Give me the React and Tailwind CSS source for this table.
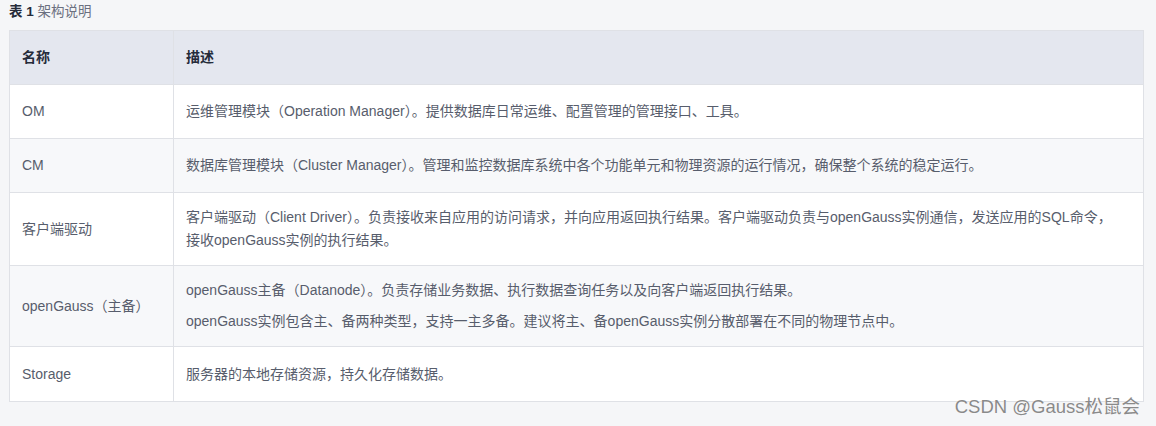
import React from 'react';

const rows = [
  { name: 'OM', desc: ['运维管理模块（Operation Manager）。提供数据库日常运维、配置管理的管理接口、工具。'] },
  { name: 'CM', desc: ['数据库管理模块（Cluster Manager）。管理和监控数据库系统中各个功能单元和物理资源的运行情况，确保整个系统的稳定运行。'] },
  {
    name: '客户端驱动',
    desc: ['客户端驱动（Client Driver）。负责接收来自应用的访问请求，并向应用返回执行结果。客户端驱动负责与openGauss实例通信，发送应用的SQL命令，接收openGauss实例的执行结果。'],
  },
  {
    name: 'openGauss（主备）',
    desc: [
      'openGauss主备（Datanode）。负责存储业务数据、执行数据查询任务以及向客户端返回执行结果。',
      'openGauss实例包含主、备两种类型，支持一主多备。建议将主、备openGauss实例分散部署在不同的物理节点中。',
    ],
  },
  { name: 'Storage', desc: ['服务器的本地存储资源，持久化存储数据。'] },
];

export default function App() {
  return (
    <div
      className="relative w-[1156px] h-[426px] bg-[#f5f6f8] pl-[9px] pr-[12px] overflow-hidden"
      style={{ fontFamily: '"Liberation Sans", "Noto Sans CJK SC", sans-serif' }}
    >
      {/* caption */}
      <div className="h-[24px] pt-[3px] text-[13.5px] leading-[18px] text-[#6b7080]">
        <span className="font-bold text-[#252b3a]">表 1</span> 架构说明
      </div>

      <div className="mt-[6px] border border-[#dfe1e6] text-[14px] text-[#575d6c]">
        {/* header */}
        <div className="grid grid-cols-[164px_1fr] h-[54px] bg-[#e4e7ef] font-bold text-[#252b3a] border-b border-[#dfe1e6]">
          <div className="flex items-center px-3 border-r border-[#dfe1e6]">名称</div>
          <div className="flex items-center px-3">描述</div>
        </div>

        {rows.map((row, i) => (
          <div
            key={row.name}
            className={`grid grid-cols-[164px_1fr] min-h-[54px] leading-[23px] ${i % 2 === 1 ? 'bg-[#f7f8fa]' : 'bg-white'} ${i < rows.length - 1 ? 'border-b border-[#dfe1e6]' : ''}`}
          >
            <div className="flex items-center px-3 py-[13px] border-r border-[#dfe1e6]">{row.name}</div>
            <div className="flex flex-col justify-center gap-[8px] pl-3 pr-[30px] py-[13px]">
              {row.desc.map((d) => (
                <p key={d}>{d}</p>
              ))}
            </div>
          </div>
        ))}
      </div>

      {/* watermark */}
      <div
        className="absolute right-[16px] top-[395px] text-[18.5px] leading-[24px] text-[#8a8a8a]"
        style={{ textShadow: '0 0 1px #fff' }}
      >
        CSDN @Gauss松鼠会
      </div>
    </div>
  );
}
